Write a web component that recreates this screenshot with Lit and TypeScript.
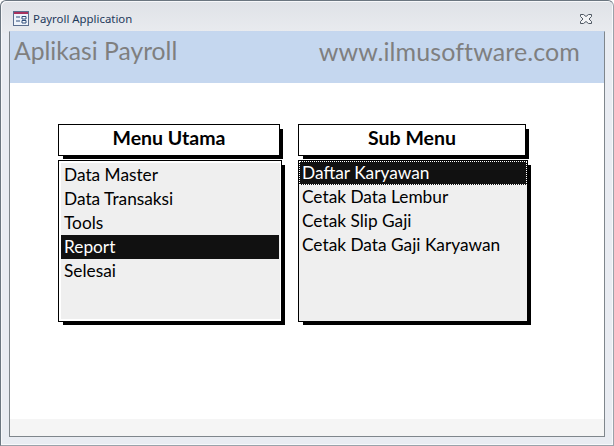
import { LitElement, html, css } from "lit";
import { customElement } from "lit/decorators.js";

@customElement("app-root")
export class AppRoot extends LitElement {
  static styles = css`
    :host { display: block; width: 614px; height: 446px; background: #fff; overflow: hidden; }
    .frame {
      box-sizing: border-box; width: 614px; height: 446px;
      display: flex; flex-direction: column;
      border: 1px solid #6b7680; border-bottom-color: #9aa2aa; border-right-color: #9aa2aa;
      border-radius: 6px 6px 0 0;
      box-shadow: inset 1px 1px 0 #f7f8fa, inset -1px -1px 0 #f7f8fa;
      background: linear-gradient(#dfe2e7 0, #e9ebef 32px, #e9ecf2 32px);
    }
    .titlebar { box-sizing: border-box; height: 30px; flex: none; display: flex; align-items: center; padding: 5px 12px 0; gap: 4px;
      font: 11.4px "Noto Sans", sans-serif; color: #1e395b; }
    .close { margin-left: auto; margin-right: 9px; display: flex; }
    .client {
      flex: 1; min-height: 0; margin: 0 8px 8px 8px; background: #fff;
      border: 1px solid #7f868c; border-top-color: #c5d6ee;
      display: flex; flex-direction: column;
    }
    .header {
      flex: none; box-sizing: border-box; height: 51px; background: #c5d7ef; color: #7f7f7f;
      display: flex; justify-content: space-between; align-items: flex-start;
      padding: 4px 24px 0 4px; font: 24.7px Lato, sans-serif;
    }
    .url { font-size: 25px; letter-spacing: 0.1px; }
    .detail { flex: 1; min-height: 0; display: flex; gap: 16px; padding: 41px 0 0 48px; }
    .footer { flex: none; height: 17px; background: #f5f5f5; }
    .col { display: flex; flex-direction: column; gap: 4px; }
    .title {
      box-sizing: border-box; height: 32px; background: #fff; border: 1px solid #000;
      box-shadow: 4px 4px 0 -1px #000;
      display: flex; align-items: center; justify-content: center; padding-bottom: 5px;
      font: 700 19.5px Lato, sans-serif; color: #000;
    }
    .list {
      box-sizing: border-box; height: 162px; background: #efefef;
      border: 1px solid #000;
      box-shadow: 4px 4px 0 -1px #000, inset 2px 2px 0 #fff, inset -1px -2px 0 #fff;
      padding: 2px; font: 17.3px/24px Lato, sans-serif; color: #000;
    }
    .m { width: 224px; } .m .title { width: 222px; }
    .s { width: 230px; } .s .title { width: 228px; }
    .item { height: 24px; padding-left: 3px; white-space: nowrap; line-height: 23px; }
    .sel { background: #111; color: #fff; }
    .s .list { padding: 0; box-shadow: 4px 4px 0 -1px #000; }
    .focus { outline: 1px dotted #fff; outline-offset: -1px; }
  `;
  render() {
    return html`<div class="frame">
      <div class="titlebar">
        <svg width="16" height="15" viewBox="0 0 16 15">
          <rect x=".5" y=".5" width="15" height="14" fill="#eef3fa" stroke="#5c6f90"/>
          <rect x="1" y="1" width="14" height="2" fill="#a8325e"/>
          <path d="M3 6h4M3 10h4" stroke="#2f4d7a"/>
          <path d="M9 5.5h4v2.500h-4zM9 9.500h4v2.500h-4z" fill="#fff" stroke="#2f4d7a"/>
        </svg>
        <span>Payroll Application</span>
        <span class="close"><svg width="12" height="10" viewBox="0 0 12 10">
          <path d="M.5 .5h3l2.500 2 2.500-2h3v2l-2.500 2.500 2.500 2.500v2h-3l-2.500-2-2.500 2h-3v-2l2.500-2.500-2.500-2.500z" fill="#f2f3f5" stroke="#4f5863"/>
        </svg></span>
      </div>
      <div class="client">
        <div class="header"><span>Aplikasi Payroll</span><span class="url">www.ilmusoftware.com</span></div>
        <div class="detail">
          <div class="col m">
            <div class="title">Menu Utama</div>
            <div class="list">
              <div class="item">Data Master</div>
              <div class="item">Data Transaksi</div>
              <div class="item">Tools</div>
              <div class="item sel">Report</div>
              <div class="item">Selesai</div>
            </div>
          </div>
          <div class="col s">
            <div class="title">Sub Menu</div>
            <div class="list">
              <div class="item sel focus">Daftar Karyawan</div>
              <div class="item">Cetak Data Lembur</div>
              <div class="item">Cetak Slip Gaji</div>
              <div class="item">Cetak Data Gaji Karyawan</div>
            </div>
          </div>
        </div>
        <div class="footer"></div>
      </div>
    </div>`;
  }
}
